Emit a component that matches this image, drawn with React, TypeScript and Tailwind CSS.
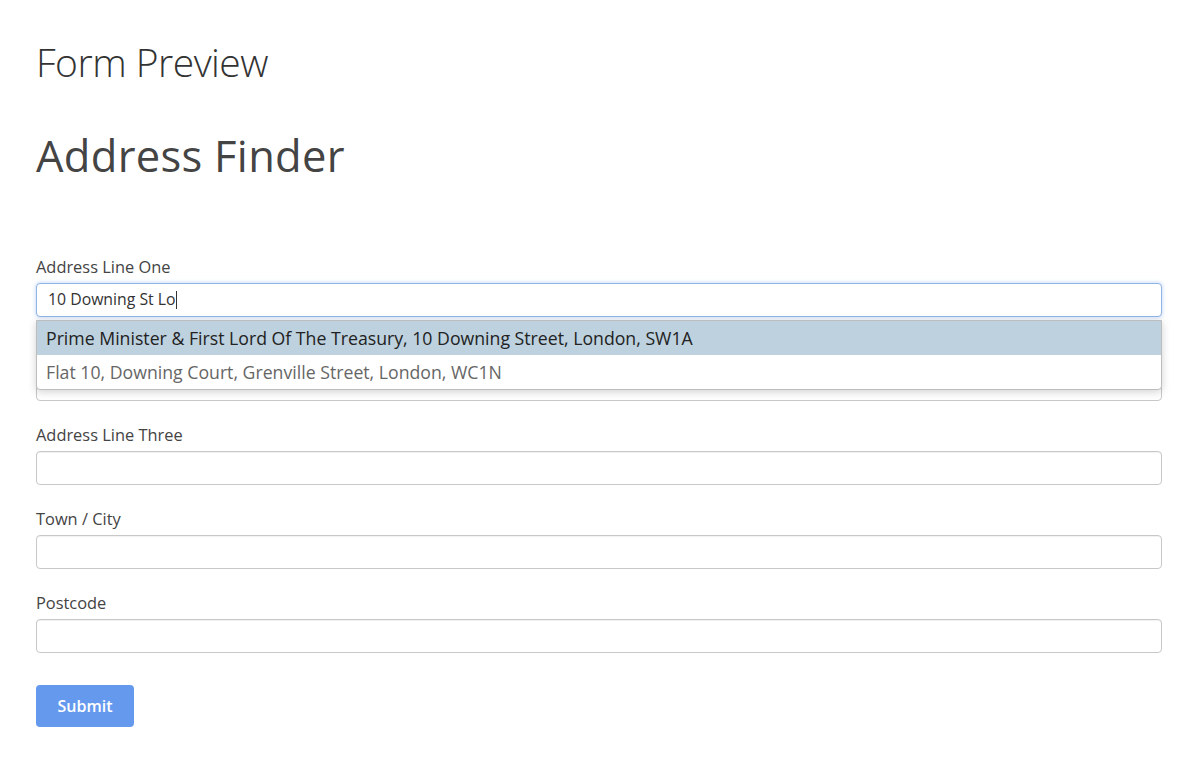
import React from "react";

const font = { fontFamily: '"Open Sans", "Noto Sans", sans-serif' };

function Field({ label, children }: { label: string; children?: React.ReactNode }) {
  return (
    <div className="relative mb-[24px]">
      <div className="h-5 mb-[6px] text-[16.4px] leading-5 text-[#444]">{label}</div>
      {children ?? (
        <div className="h-[34px] rounded-[4px] border border-[#c8c8c8] bg-white shadow-[inset_0_1px_1px_rgba(0,0,0,0.06)]" />
      )}
    </div>
  );
}

export default function App() {
  return (
    <div className="min-h-[766px] w-full bg-white pl-[36px] pr-[40px]" style={font}>
      <div className="pt-[36px] h-[124px]">
        <h1 className="text-[39px] font-light leading-[52px] text-[#333] tracking-[-0.5px]">Form Preview</h1>
      </div>
      <h2 className="mt-[6px] text-[43.5px] font-normal leading-[52px] text-[#444] h-[127px] tracking-[0.3px]">Address Finder</h2>

      <Field label="Address Line One">
        <div className="relative">
          <div className="h-[34px] rounded-[4px] border border-[#8fb4e6] bg-white shadow-[0_0_4px_rgba(100,150,230,0.45)] flex items-center pl-[11px] text-[15.8px] text-[#333]">
            10 Downing St Lo<span className="inline-block w-px h-[18px] bg-[#333]" />
          </div>
          <div className="absolute left-0 right-0 top-[37px] z-10 rounded-b-[4px] border border-[#bdbdbd] bg-white shadow-[0_2px_8px_rgba(0,0,0,0.18)] overflow-hidden">
            <div className="h-[34px] bg-[#bdd1de] flex items-center pl-[9px] text-[17.7px] text-[#222]">
              Prime Minister &amp; First Lord Of The Treasury, 10 Downing Street, London, SW1A
            </div>
            <div className="h-[34px] flex items-center pl-[9px] text-[17.7px] text-[#666]">
              Flat 10, Downing Court, Grenville Street, London, WC1N
            </div>
          </div>
        </div>
      </Field>
      <Field label="Address Line Two" />
      <Field label="Address Line Three" />
      <Field label="Town / City" />
      <Field label="Postcode" />

      <div className="pt-[8px]">
        <button className="w-[98px] h-[42px] rounded-[4px] bg-[#6599ee] text-white text-[16px] font-semibold" style={font}>
          Submit
        </button>
      </div>
    </div>
  );
}
